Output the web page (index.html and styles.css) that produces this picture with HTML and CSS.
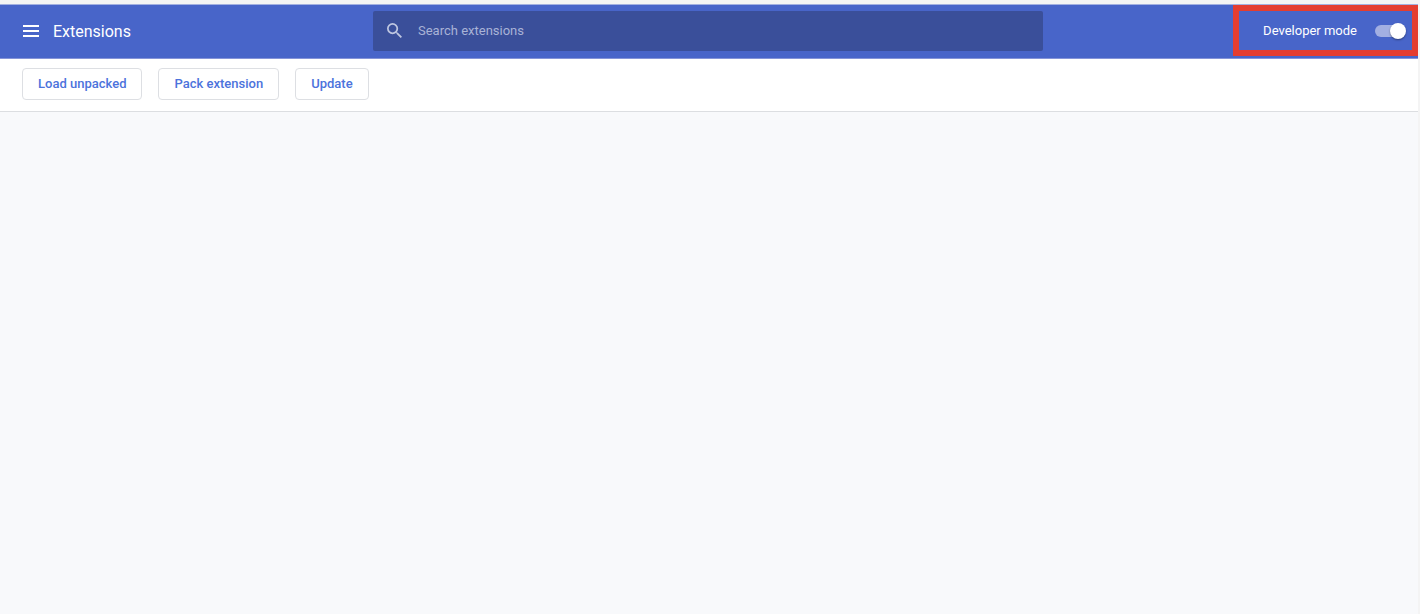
FILE: index.html
```html
<!DOCTYPE html>
<html lang="en">
<head>
<meta charset="utf-8">
<title>Extensions</title>
<link rel="stylesheet" href="styles.css">
</head>
<body>
<div class="page">
  <header class="header">
    <div class="brand">
      <button class="menu-button" type="button" aria-label="Main menu">
        <svg class="menu-icon" viewBox="0 0 16 12" aria-hidden="true"><path d="M0 0h16v2H0zM0 5h16v2H0zM0 10h16v2H0z"/></svg>
      </button>
      <h1 class="title">Extensions</h1>
    </div>
    <label class="search">
      <svg class="search-icon" viewBox="3 3 17.5 17.5" aria-hidden="true"><path d="M15.5 14h-.79l-.28-.27A6.471 6.471 0 0 0 16 9.5 6.5 6.5 0 1 0 9.5 16c1.61 0 3.09-.59 4.23-1.57l.27.28v.79l5 4.99L20.49 19l-4.99-5zm-6 0C7.01 14 5 11.99 5 9.5S7.01 5 9.5 5 14 7.01 14 9.5 11.99 14 9.5 14z"/></svg>
      <input class="search-input" type="search" placeholder="Search extensions" aria-label="Search extensions">
    </label>
    <div class="mode">
      <label class="mode-highlight">
        <span class="mode-label">Developer mode</span>
        <input class="toggle" type="checkbox" role="switch" checked>
      </label>
    </div>
  </header>
  <div class="toolbar">
    <button class="action" type="button">Load unpacked</button>
    <button class="action" type="button">Pack extension</button>
    <button class="action" type="button">Update</button>
  </div>
  <main class="content"></main>
</div>
</body>
</html>
```
FILE: styles.css
```css
* {
  box-sizing: border-box;
}

body {
  margin: 0;
  padding: 4px 2px 0 0;
  background: #f4f4f4;
  font-family: Roboto, "Liberation Sans", sans-serif;
  font-size: 13px;
}

.page {
  display: flex;
  flex-direction: column;
  min-height: calc(100vh - 4px);
  background: #f8f9fb;
}

.header {
  display: grid;
  grid-template-columns: 373fr 670fr 375fr;
  align-items: start;
  height: 55px;
  border-top: 1px solid #a3b0e0;
  border-bottom: 1px solid #8594d8;
  background: #4865c9;
  color: #fff;
}

.brand {
  display: flex;
  align-items: center;
  gap: 14px;
  height: 52px;
  padding-left: 23px;
}

.menu-button {
  padding: 0;
  border: 0;
  background: none;
}

.menu-icon {
  display: block;
  width: 16px;
  height: 12px;
  fill: #fff;
}

.title {
  margin: 0;
  padding-top: 2px;
  font-size: 16px;
  font-weight: 400;
  line-height: 20px;
}

.search {
  display: flex;
  align-items: center;
  gap: 16px;
  height: 40px;
  margin-top: 6px;
  padding: 0 14px 2px;
  border-radius: 2px;
  background: #3a4f9a;
}

.search-icon {
  width: 15px;
  height: 15px;
  fill: #bfc7e1;
}

.search-input {
  flex: 1;
  min-width: 0;
  padding: 0;
  border: 0;
  outline: 0;
  background: none;
  color: #fff;
  font: inherit;
}

.search-input::placeholder {
  color: #a9b3d6;
  opacity: 1;
}

.mode {
  display: flex;
  justify-content: flex-end;
}

.mode-highlight {
  display: flex;
  align-items: center;
  gap: 18px;
  height: 51px;
  padding: 0 6px 0 24px;
  border: 6px solid #e43d30;
}

.toggle {
  position: relative;
  width: 31px;
  height: 16px;
  margin: 0;
  appearance: none;
}

.toggle::before {
  content: "";
  position: absolute;
  inset: 2px 3px 2px 0;
  border-radius: 6px;
  background: #a2afe2;
}

.toggle::after {
  content: "";
  position: absolute;
  top: 0;
  right: 0;
  width: 16px;
  height: 16px;
  border-radius: 50%;
  background: #fff;
  box-shadow: 0 1px 2px rgba(0, 0, 0, 0.4);
}

.toolbar {
  display: flex;
  align-items: flex-start;
  gap: 16px;
  padding: 9px 22px 11px;
  border-bottom: 1px solid #dcdee1;
  background: #fff;
}

.action {
  height: 32px;
  padding: 0 15px 1px;
  border: 1px solid #dddfe3;
  border-radius: 4px;
  background: #fff;
  color: #4c73dc;
  font: inherit;
  font-weight: 500;
}

.content {
  flex: 1;
}
```
